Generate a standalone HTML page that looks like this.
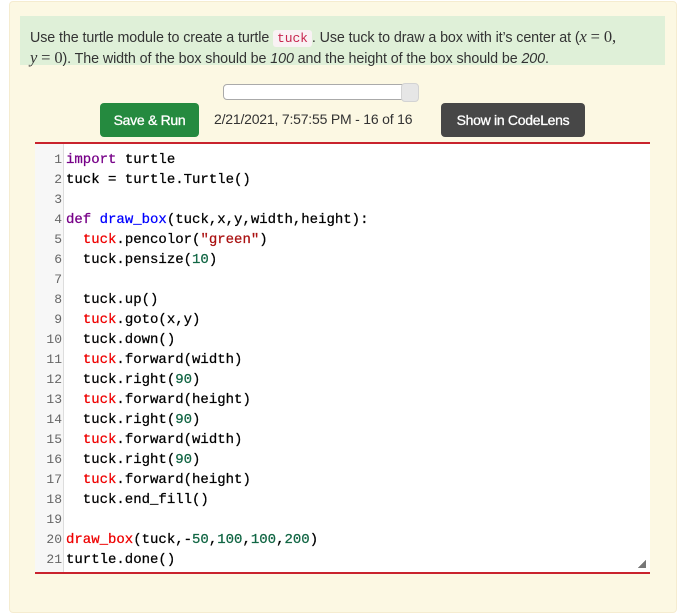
<!DOCTYPE html>
<html><head><meta charset="utf-8"><style>
body{margin:0;width:690px;height:598px;background:#fff;font-family:"Liberation Sans",sans-serif;overflow:hidden;position:relative}
.outer{position:absolute;left:9px;top:1px;width:666px;height:610px;background:#fcf8e3;border:1px solid #f5ecd0;border-radius:4px}
.instr{position:absolute;left:20px;top:16px;width:645px;height:49px;background:#dff0d8}
.instr p{margin:0;position:absolute;left:10px;top:11px;font-size:14.3px;line-height:19px;color:#333;width:635px;letter-spacing:-0.1px}
code{font-family:"Liberation Mono",monospace;font-size:13px;color:#c7254e;background:#f9f2f4;padding:1px 4px;border-radius:3px}
.m{font-family:"Liberation Serif",serif;font-style:italic;font-size:16.5px}
.mn{font-family:"Liberation Serif",serif;font-size:16.5px}
.slider{position:absolute;left:223px;top:84px;width:194px;height:14px;background:#fff;border:1px solid #aaa;border-radius:4px}
.handle{position:absolute;left:401px;top:83px;width:16px;height:17px;background:#e6e6e6;border:1px solid #d3d3d3;border-radius:4px}
.btn{position:absolute;top:103px;height:34px;line-height:34px;color:#fff;font-size:14px;text-align:center;border-radius:4px;letter-spacing:-0.3px;-webkit-text-stroke:0.3px #fff}
.save{left:100px;width:99px;background:#258a3f}
.lens{left:441px;width:144px;background:#474747}
.date{position:absolute;left:214px;top:111px;font-size:14px;color:#333;letter-spacing:-0.2px}
.ed{position:absolute;left:35px;top:142px;width:615px;height:428px;background:#fff;border-top:2px solid #c9232d;border-bottom:2px solid #c9232d}
.gut{position:absolute;left:0;top:0;width:28px;height:428px;background:#f7f7f7;border-right:1px solid #ddd}
.lines{position:absolute;left:0;top:6px;font-family:"Liberation Mono","DejaVu Sans Mono",monospace;font-size:14px;line-height:20px;-webkit-text-stroke:0.25px}
.ln{display:inline-block;width:27px;text-align:right;color:#666;font-size:13px;padding-right:4px;-webkit-text-stroke:0}
.kw{color:#708}.df{color:#00f}.r{color:#e00}.s{color:#a11}.n{color:#164}
.grip{position:absolute;right:4px;bottom:4px;width:8px;height:8px;background:linear-gradient(135deg,transparent 50%,#555 50%);opacity:.8}
</style></head><body>
<div class="outer"></div>
<div class="instr"><p>Use the turtle module to create a turtle <code>tuck</code>. Use tuck to draw a box with it’s center at (<span class="m">x</span> <span class="mn">= 0,</span><br><span class="m">y</span> <span class="mn">= 0</span>). The width of the box should be <i>100</i> and the height of the box should be <i>200</i>.</p></div>
<div class="slider"></div><div class="handle"></div>
<div class="btn save">Save &amp; Run</div>
<div class="date">2/21/2021, 7:57:55 PM - 16 of 16</div>
<div class="btn lens">Show in CodeLens</div>
<div class="ed"><div class="gut"></div>
<div class="lines"><pre style="margin:0;font:inherit">
<span class="ln">1</span><span class="kw">import</span> turtle
<span class="ln">2</span>tuck = turtle.Turtle()
<span class="ln">3</span>
<span class="ln">4</span><span class="kw">def</span> <span class="df">draw_box</span>(tuck,x,y,width,height):
<span class="ln">5</span>  <span class="r">tuck</span>.pencolor(<span class="s">"green"</span>)
<span class="ln">6</span>  tuck.pensize(<span class="n">10</span>)
<span class="ln">7</span>
<span class="ln">8</span>  tuck.up()
<span class="ln">9</span>  <span class="r">tuck</span>.goto(x,y)
<span class="ln">10</span>  tuck.down()
<span class="ln">11</span>  <span class="r">tuck</span>.forward(width)
<span class="ln">12</span>  tuck.right(<span class="n">90</span>)
<span class="ln">13</span>  <span class="r">tuck</span>.forward(height)
<span class="ln">14</span>  tuck.right(<span class="n">90</span>)
<span class="ln">15</span>  <span class="r">tuck</span>.forward(width)
<span class="ln">16</span>  tuck.right(<span class="n">90</span>)
<span class="ln">17</span>  <span class="r">tuck</span>.forward(height)
<span class="ln">18</span>  tuck.end_fill()
<span class="ln">19</span>
<span class="ln">20</span><span class="r">draw_box</span>(tuck,-<span class="n">50</span>,<span class="n">100</span>,<span class="n">100</span>,<span class="n">200</span>)
<span class="ln">21</span>turtle.done()</pre></div>
<div class="grip"></div></div>
</body></html>
